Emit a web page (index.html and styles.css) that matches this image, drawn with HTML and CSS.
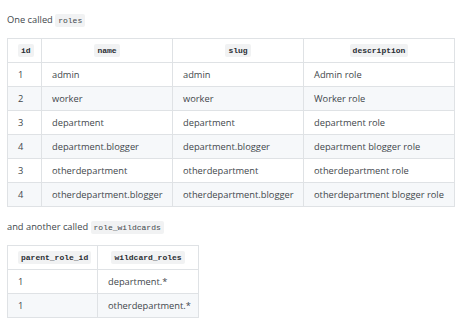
FILE: index.html
```html
<!DOCTYPE html>
<html>
<head>
<meta charset="utf-8">
<link rel="stylesheet" href="styles.css">
</head>
<body>
<p class="para">One called <code>roles</code></p>
<table class="tbl roles">
  <colgroup><col class="c-id"><col class="c-name"><col class="c-slug"><col class="c-desc"></colgroup>
  <thead>
    <tr><th><code>id</code></th><th><code>name</code></th><th><code>slug</code></th><th><code>description</code></th></tr>
  </thead>
  <tbody>
    <tr><td>1</td><td>admin</td><td>admin</td><td>Admin role</td></tr>
    <tr><td>2</td><td>worker</td><td>worker</td><td>Worker role</td></tr>
    <tr><td>3</td><td>department</td><td>department</td><td>department role</td></tr>
    <tr><td>4</td><td>department.blogger</td><td>department.blogger</td><td>department blogger role</td></tr>
    <tr><td>3</td><td>otherdepartment</td><td>otherdepartment</td><td>otherdepartment role</td></tr>
    <tr><td>4</td><td>otherdepartment.blogger</td><td>otherdepartment.blogger</td><td>otherdepartment blogger role</td></tr>
  </tbody>
</table>
<p class="para">and another called <code>role_wildcards</code></p>
<table class="tbl wild">
  <colgroup><col class="c-parent"><col class="c-wild"></colgroup>
  <thead>
    <tr><th><code>parent_role_id</code></th><th><code>wildcard_roles</code></th></tr>
  </thead>
  <tbody>
    <tr><td>1</td><td>department.*</td></tr>
    <tr><td>1</td><td>otherdepartment.*</td></tr>
  </tbody>
</table>
</body>
</html>
```
FILE: styles.css
```css
html, body {
  margin: 0;
  background: #ffffff;
}
body {
  padding: 12px 7px 0 7px;
  font-family: "Open Sans", "Noto Sans", sans-serif;
  font-size: 9.3px;
  color: #42474c;
}
.para {
  margin: 0 0 10px 0;
  line-height: 16px;
  height: 16px;
}
.tbl + .para {
  margin-top: 12px;
}
code {
  font-family: "Liberation Mono", "DejaVu Sans Mono", monospace;
  font-size: 8px;
  background: #f1f2f3;
  padding: 2px 3px;
  border-radius: 2px;
}
.tbl {
  border-collapse: collapse;
  table-layout: fixed;
}
.roles { width: 447px; }
.wild { width: 191px; }
.tbl tr {
  height: 24px;
}
.tbl th, .tbl td {
  border: 1px solid #dfe2e5;
  padding: 0 10px;
  line-height: 14px;
  white-space: nowrap;
  overflow: hidden;
}
.tbl th {
  font-weight: 700;
  text-align: center;
}
.tbl th code {
  font-weight: 700;
  color: #2a2e33;
}
.tbl td {
  text-align: left;
}
.tbl tbody tr:nth-child(odd) { background: #ffffff; }
.tbl tbody tr:nth-child(even) { background: #f6f8fa; }
.c-id { width: 34px; }
.c-name { width: 131px; }
.c-slug { width: 131px; }
.c-desc { width: 151px; }
.c-parent { width: 90px; }
.c-wild { width: 101px; }
```
